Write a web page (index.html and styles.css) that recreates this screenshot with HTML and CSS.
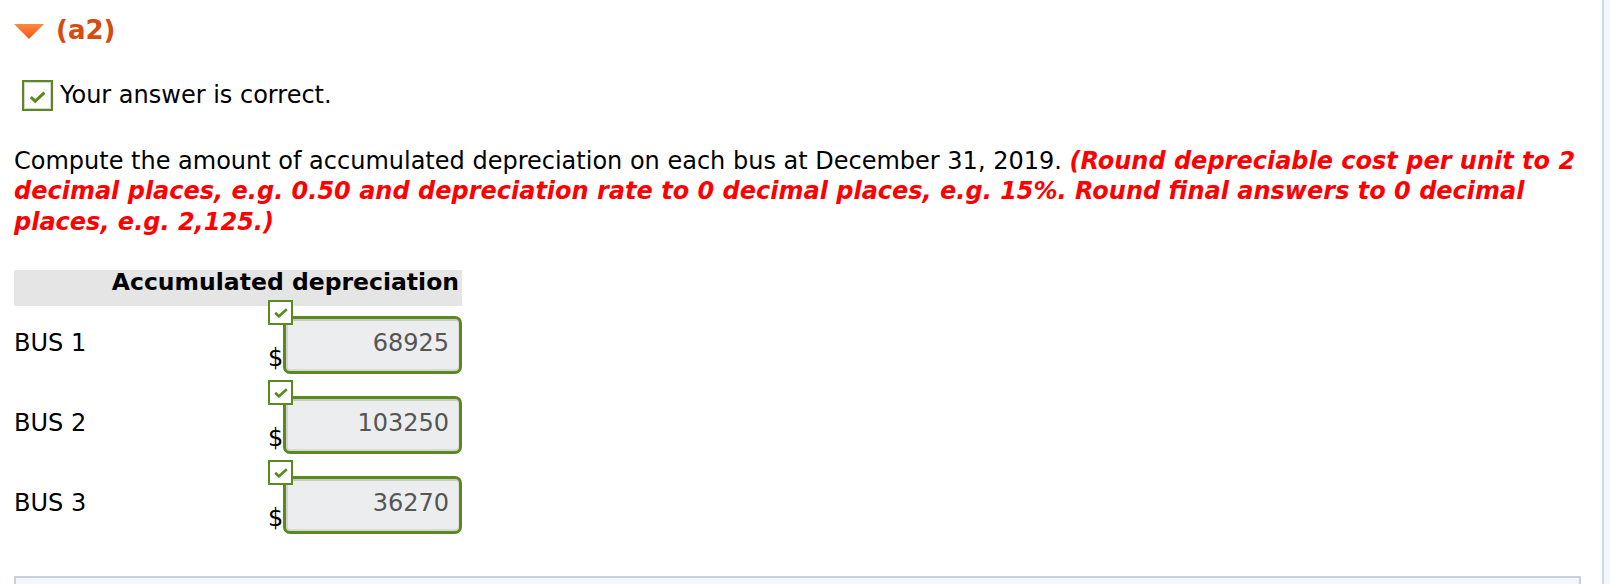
FILE: index.html
```html
<!DOCTYPE html>
<html lang="en">
<head>
<meta charset="utf-8">
<title>(a2)</title>
<link rel="stylesheet" href="styles.css">
</head>
<body>
<div class="frame">
  <main class="content">
    <div class="part-head">
      <svg class="caret" width="30" height="15" viewBox="0 0 30 15" aria-hidden="true">
        <defs>
          <linearGradient id="caretGrad" x1="0" y1="0" x2="0" y2="1">
            <stop offset="0" stop-color="#ff8b3e"/>
            <stop offset="1" stop-color="#ef521a"/>
          </linearGradient>
        </defs>
        <path d="M0 0H30L15 15Z" fill="url(#caretGrad)"/>
      </svg>
      <span class="part-label">(a2)</span>
    </div>

    <div class="feedback">
      <span class="mark mark-lg">
        <svg width="17" height="12" viewBox="0 0 17 12" aria-hidden="true"><path d="M1.8 6.2L6.2 10.2L15.4 1.6" fill="none" stroke="#5a8a1e" stroke-width="3"/></svg>
      </span>
      <span>Your answer is correct.</span>
    </div>

    <p class="question">Compute the amount of accumulated depreciation on each bus at December 31, 2019. <em class="hint">(Round depreciable cost per unit to 2 decimal places, e.g. 0.50 and depreciation rate to 0 decimal places, e.g. 15%. Round final answers to 0 decimal places, e.g. 2,125.)</em></p>

    <table class="answers">
      <colgroup>
        <col class="col-label">
        <col class="col-answer">
      </colgroup>
      <thead>
        <tr><th colspan="2">Accumulated depreciation</th></tr>
      </thead>
      <tbody>
        <tr>
          <td class="label">BUS 1</td>
          <td class="answer">
            <span class="mark mark-sm"><svg width="14" height="10" viewBox="0 0 14 10" aria-hidden="true"><path d="M1.2 4.8L5 8.2L12.8 1.2" fill="none" stroke="#5a8a1e" stroke-width="2.6"/></svg></span>
            <div class="field"><span class="cur">$</span><span class="input">68925</span></div>
          </td>
        </tr>
        <tr>
          <td class="label">BUS 2</td>
          <td class="answer">
            <span class="mark mark-sm"><svg width="14" height="10" viewBox="0 0 14 10" aria-hidden="true"><path d="M1.2 4.8L5 8.2L12.8 1.2" fill="none" stroke="#5a8a1e" stroke-width="2.6"/></svg></span>
            <div class="field"><span class="cur">$</span><span class="input">103250</span></div>
          </td>
        </tr>
        <tr>
          <td class="label">BUS 3</td>
          <td class="answer">
            <span class="mark mark-sm"><svg width="14" height="10" viewBox="0 0 14 10" aria-hidden="true"><path d="M1.2 4.8L5 8.2L12.8 1.2" fill="none" stroke="#5a8a1e" stroke-width="2.6"/></svg></span>
            <div class="field"><span class="cur">$</span><span class="input">36270</span></div>
          </td>
        </tr>
      </tbody>
    </table>

    <div class="next-box"></div>
  </main>
</div>
</body>
</html>
```

FILE: styles.css
```css
html, body {
  margin: 0;
  padding: 0;
  height: 584px;
  overflow: hidden;
}

body {
  background: #f3f6fa;
  font-family: "DejaVu Sans", Verdana, sans-serif;
  font-size: 24px;
  line-height: 30.7px;
  color: #000;
}

.frame {
  width: 1602px;
  height: 584px;
  overflow: hidden;
  background: #fff;
  border-right: 2px solid #ccd8e6;
}

.content {
  padding: 15px 2px 0 14px;
}

.part-head {
  display: flex;
  align-items: center;
  gap: 12px;
  height: 31px;
}

.caret {
  display: block;
  margin-top: 1px;
}

.part-label {
  font-weight: bold;
  font-size: 26px;
  color: #d64b0e;
}

.feedback {
  display: flex;
  align-items: center;
  gap: 7px;
  margin-top: 34px;
  margin-left: 8px;
  height: 31px;
}

.mark {
  box-sizing: border-box;
  display: flex;
  align-items: center;
  justify-content: center;
  background: #fff;
  border: 2px solid #5a8a1e;
}

.mark-lg {
  width: 31px;
  height: 31px;
  box-shadow: inset 0 0 0 1px #d6d6d6;
  padding-top: 3px;
}

.mark-lg svg {
  display: block;
}

.question {
  margin: 34.5px 0 0;
}

.hint {
  color: #ff0000;
  font-weight: bold;
  font-style: italic;
}

.answers {
  margin-top: 32.5px;
  width: 448px;
  border-collapse: collapse;
  border-spacing: 0;
  table-layout: fixed;
}

.col-label {
  width: 254px;
}

.col-answer {
  width: 194px;
}

.answers th {
  background: #e5e5e5;
  height: 36px;
  box-sizing: border-box;
  padding: 0 3px 0 0;
  font-size: 23.5px;
  line-height: 24px;
  font-weight: bold;
  text-align: right;
  vertical-align: top;
  white-space: nowrap;
}

.answers td {
  padding: 0;
}

.label {
  vertical-align: top;
  padding-top: 22px !important;
}

.answer {
  vertical-align: top;
  padding-bottom: 12px !important;
}

.mark-sm {
  position: relative;
  z-index: 1;
  width: 25px;
  height: 25px;
  margin-top: -6px;
  margin-bottom: -9px;
}

.mark-sm svg {
  display: block;
}

.field {
  display: flex;
  align-items: flex-end;
}

.cur {
  width: 15px;
  line-height: 30.7px;
}

.input {
  box-sizing: border-box;
  width: 179px;
  height: 58px;
  display: flex;
  align-items: center;
  justify-content: flex-end;
  padding: 0 10px 3px 0;
  border: 3px solid #5a8a1e;
  border-radius: 7px;
  background: #ecedef;
  box-shadow: inset 0 2px 0 #c9c9cb, inset 2px 0 0 #d3d3d5, inset 0 -2px 0 #d8d8da, inset -1px 0 0 #dcdcde;
  color: #555;
}

.next-box {
  margin-top: 30px;
  margin-right: 19px;
  height: 40px;
  box-sizing: border-box;
  border: 2px solid #c6d1de;
  border-bottom: none;
  background: #f4f7fa;
}
```
